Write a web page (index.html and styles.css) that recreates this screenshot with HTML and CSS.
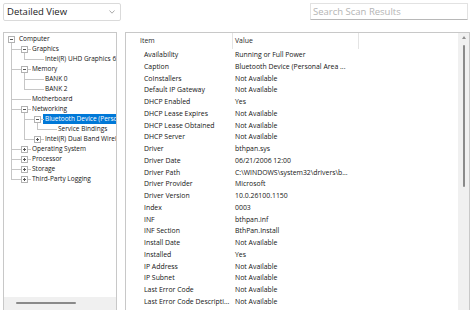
FILE: index.html
```html
<!DOCTYPE html>
<html>
<head>
<meta charset="utf-8">
<title>Detailed View</title>
<link rel="stylesheet" href="styles.css">
</head>
<body>
<div class="app">
  <div class="toolbar">
    <div class="select">
      <span class="select-text">Detailed View</span>
      <svg class="chev" width="6" height="4" viewBox="0 0 6 4"><polyline points="0.5,0.5 3,3.2 5.5,0.5" fill="none" stroke="#a0a0a0" stroke-width="0.9"/></svg>
    </div>
    <div class="search"><span class="placeholder">Search Scan Results</span></div>
  </div>

  <div class="panes">
    <div class="tree-pane">
      <div class="tree">
        <div class="row"><span class="c own down"><i class="btn minus"></i></span><span class="lbl">Computer</span></div>
        <div class="row"><span class="c t"></span><span class="c own h down"><i class="btn minus"></i></span><span class="lbl">Graphics</span></div>
        <div class="row"><span class="c v"></span><span class="c l"></span><span class="c own h"></span><span class="lbl">Intel(R) UHD Graphics 620</span></div>
        <div class="row"><span class="c t"></span><span class="c own h down"><i class="btn minus"></i></span><span class="lbl">Memory</span></div>
        <div class="row"><span class="c v"></span><span class="c t"></span><span class="c own h"></span><span class="lbl">BANK 0</span></div>
        <div class="row"><span class="c v"></span><span class="c l"></span><span class="c own h"></span><span class="lbl">BANK 2</span></div>
        <div class="row"><span class="c t"></span><span class="c own h"></span><span class="lbl">Motherboard</span></div>
        <div class="row"><span class="c t"></span><span class="c own h down"><i class="btn minus"></i></span><span class="lbl">Networking</span></div>
        <div class="row"><span class="c v"></span><span class="c t"></span><span class="c own h down"><i class="btn minus"></i></span><span class="lbl selected">Bluetooth Device (Personal Area Network)</span></div>
        <div class="row"><span class="c v"></span><span class="c v"></span><span class="c l"></span><span class="c own h"></span><span class="lbl">Service Bindings</span></div>
        <div class="row"><span class="c v"></span><span class="c l"></span><span class="c own h"><i class="btn plus"></i></span><span class="lbl">Intel(R) Dual Band Wireless-AC 8265</span></div>
        <div class="row"><span class="c t"></span><span class="c own h"><i class="btn plus"></i></span><span class="lbl">Operating System</span></div>
        <div class="row"><span class="c t"></span><span class="c own h"><i class="btn plus"></i></span><span class="lbl">Processor</span></div>
        <div class="row"><span class="c t"></span><span class="c own h"><i class="btn plus"></i></span><span class="lbl">Storage</span></div>
        <div class="row"><span class="c l"></span><span class="c own h"><i class="btn plus"></i></span><span class="lbl">Third-Party Logging</span></div>
      </div>
      <div class="hscroll"><i class="hthumb"></i></div>
    </div>

    <div class="list-pane">
      <div class="list">
        <div class="hdr"><span class="ci">Item</span><span class="cv">Value</span><span class="cx"></span></div>
        <div class="r"><span class="ci">Availability</span><span class="cv">Running or Full Power</span></div>
        <div class="r"><span class="ci">Caption</span><span class="cv">Bluetooth Device (Personal Area ...</span></div>
        <div class="r"><span class="ci">CoInstallers</span><span class="cv">Not Available</span></div>
        <div class="r"><span class="ci">Default IP Gateway</span><span class="cv">Not Available</span></div>
        <div class="r"><span class="ci">DHCP Enabled</span><span class="cv">Yes</span></div>
        <div class="r"><span class="ci">DHCP Lease Expires</span><span class="cv">Not Available</span></div>
        <div class="r"><span class="ci">DHCP Lease Obtained</span><span class="cv">Not Available</span></div>
        <div class="r"><span class="ci">DHCP Server</span><span class="cv">Not Available</span></div>
        <div class="r"><span class="ci">Driver</span><span class="cv">bthpan.sys</span></div>
        <div class="r"><span class="ci">Driver Date</span><span class="cv">06/21/2006 12:00</span></div>
        <div class="r"><span class="ci">Driver Path</span><span class="cv">C:\WINDOWS\system32\drivers\b...</span></div>
        <div class="r"><span class="ci">Driver Provider</span><span class="cv">Microsoft</span></div>
        <div class="r"><span class="ci">Driver Version</span><span class="cv">10.0.26100.1150</span></div>
        <div class="r"><span class="ci">Index</span><span class="cv">0003</span></div>
        <div class="r"><span class="ci">INF</span><span class="cv">bthpan.inf</span></div>
        <div class="r"><span class="ci">INF Section</span><span class="cv">BthPan.Install</span></div>
        <div class="r"><span class="ci">Install Date</span><span class="cv">Not Available</span></div>
        <div class="r"><span class="ci">Installed</span><span class="cv">Yes</span></div>
        <div class="r"><span class="ci">IP Address</span><span class="cv">Not Available</span></div>
        <div class="r"><span class="ci">IP Subnet</span><span class="cv">Not Available</span></div>
        <div class="r"><span class="ci">Last Error Code</span><span class="cv">Not Available</span></div>
        <div class="r"><span class="ci">Last Error Code Descripti...</span><span class="cv">Not Available</span></div>
      </div>
      <div class="vscroll"><i class="up"></i><i class="vthumb"></i></div>
    </div>
  </div>
</div>
</body>
</html>
```
FILE: styles.css
```css
* { box-sizing: border-box; }
html, body { margin: 0; padding: 0; background: #fff; }
body {
  width: 474px;
  height: 310px;
  overflow: hidden;
  font-family: "Open Sans", "Noto Sans", sans-serif;
  color: #141414;
}
.app { display: flex; flex-direction: column; }

/* toolbar */
.toolbar {
  height: 32px;
  display: flex;
  align-items: flex-start;
  justify-content: space-between;
  padding: 3px 6px 0 3px;
}
.select {
  width: 118px;
  height: 18px;
  border: 1px solid #dadada;
  border-radius: 2px;
  display: flex;
  align-items: center;
  justify-content: space-between;
  padding: 0 5px 0 3px;
  background: #fff;
}
.select-text { font-size: 9.5px; line-height: 16px; color: #1b1b1b; }
.chev { display: block; }
.search {
  width: 158px;
  height: 17px;
  border: 1px solid #e2e2e2;
  border-bottom-color: #b8b8b8;
  border-radius: 1px;
  display: flex;
  align-items: center;
  padding-left: 2px;
}
.placeholder { font-size: 9.5px; line-height: 15px; color: #b4b4b4; }

/* panes */
.panes {
  display: flex;
  gap: 8px;
  padding-left: 3px;
}
.tree-pane {
  width: 114px;
  height: 281px;
  border: 1px solid #c8c8c8;
  display: flex;
  flex-direction: column;
  overflow: hidden;
}
.tree {
  flex: 1;
  overflow: hidden;
  padding: 1px 0 0 1px;
}
.row {
  display: flex;
  height: 10px;
  white-space: nowrap;
  overflow: hidden;
}
.c {
  --ln: #c6c6c6;
  flex: none;
  width: 13px;
  height: 10px;
  position: relative;
  display: flex;
  justify-content: center;
  align-items: flex-start;
}
.c::before, .c::after { content: none; position: absolute; background: var(--ln); }
.v::before, .t::before { content: ""; left: 6px; width: 1px; top: 0; bottom: 0; }
.l::before { content: ""; left: 6px; width: 1px; top: 0; height: 6px; }
.t::after, .l::after { content: ""; left: 6px; right: 0; top: 5px; height: 1px; }
.h::after { content: ""; left: 0; right: 0; top: 5px; height: 1px; }
.down::before { content: ""; left: 6px; width: 1px; top: 5px; bottom: 0; }

.btn {
  position: relative;
  z-index: 1;
  margin-top: 2px;
  width: 7px;
  height: 7px;
  border: 1px solid #b2b2b2;
  background: #fff;
}
.btn::before, .btn::after { content: ""; position: absolute; background: #555; }
.btn::before { left: 1px; top: 2px; width: 3px; height: 1px; }
.plus::after { left: 2px; top: 1px; width: 1px; height: 3px; }

.lbl {
  flex: 0 1 auto;
  min-width: 0;
  overflow: hidden;
  font-size: 6.5px;
  line-height: 10px;
  margin-left: -1px;
  padding: 0 2px;
  color: #141414;
}
.lbl.selected {
  background: #0078d7;
  color: #fff;
}

.hscroll {
  flex: none;
  height: 15px;
  background: #f0f0f0;
  padding: 5px 0 0 12px;
  display: flex;
  align-items: flex-start;
}
.hthumb {
  width: 60px;
  height: 2px;
  border-radius: 1px;
  background: #8a8a8a;
}

/* list */
.list-pane {
  width: 345px;
  height: 281px;
  border: 1px solid #c8c8c8;
  display: flex;
  overflow: hidden;
}
.list {
  flex: 1;
  overflow: hidden;
  font-size: 6.9px;
  white-space: nowrap;
}
.hdr {
  display: flex;
  height: 16px;
  line-height: 16px;
  color: #2a2a2a;
}
.hdr .ci { width: 106px; padding-left: 14px; }
.hdr .cv { width: 126px; padding-left: 2px; border-left: 1px solid #e4e4e4; }
.hdr .cx { flex: 1; border-left: 1px solid #e4e4e4; }
.r {
  display: flex;
  height: 11.76px;
  line-height: 11.76px;
}
.r .ci { width: 106px; padding-left: 18px; flex: none; }
.r .cv { padding-left: 3px; }

.vscroll {
  flex: none;
  width: 11px;
  background: #f0f0f0;
  display: flex;
  flex-direction: column;
  align-items: center;
}
.up {
  margin-top: 3px;
  width: 0;
  height: 0;
  border-left: 2.5px solid transparent;
  border-right: 2.5px solid transparent;
  border-bottom: 3px solid #8f8f8f;
}
.vthumb {
  margin-top: 6px;
  width: 2px;
  height: 142px;
  border-radius: 1px;
  background: #8a8a8a;
}
```
